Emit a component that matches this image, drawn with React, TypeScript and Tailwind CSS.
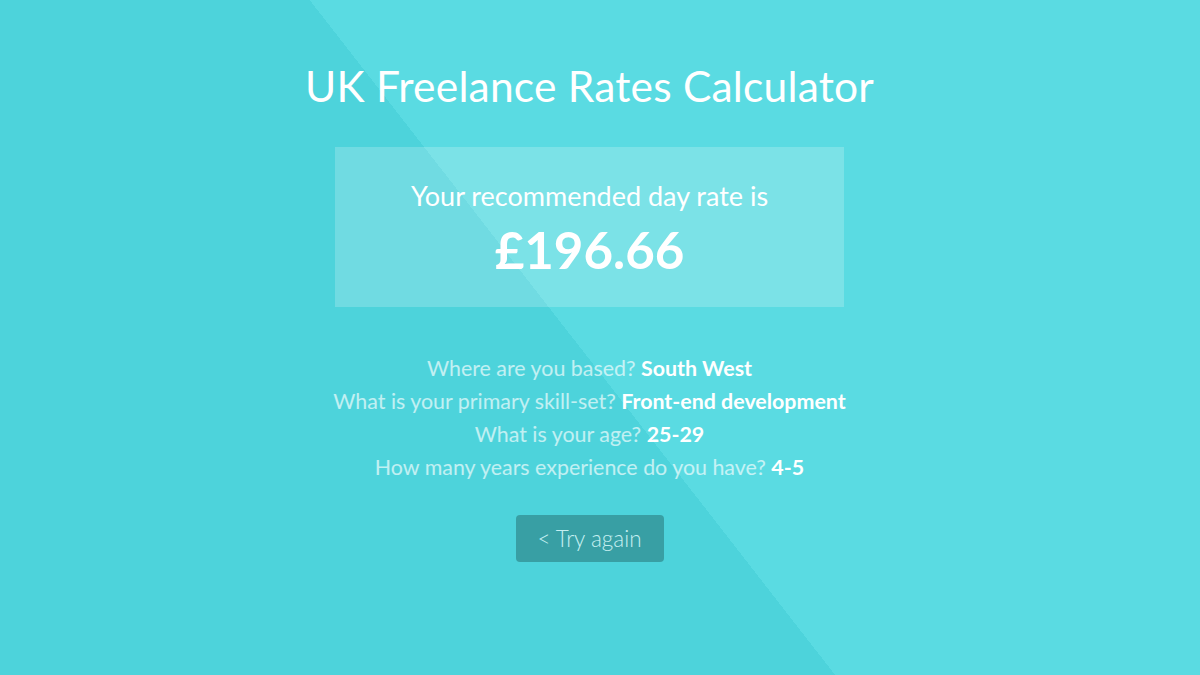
const rows = [
  { q: 'Where are you based?', a: 'South West' },
  { q: 'What is your primary skill-set?', a: 'Front-end development' },
  { q: 'What is your age?', a: '25-29' },
  { q: 'How many years experience do you have?', a: '4-5' },
];

export default function App() {
  return (
    <div
      className="w-full h-[675px] overflow-hidden bg-[linear-gradient(52.1deg,#4dd3db_48.4%,#5adbe2_48.4%)] text-white"
      style={{ fontFamily: 'Lato, "Open Sans", sans-serif' }}
    >
      <div className="flex flex-col items-center pr-[21px] pt-[58px]">
        <h1 className="text-[42.5px] leading-[56px] font-normal tracking-[0.2px]">
          UK Freelance Rates Calculator
        </h1>

        <div className="mt-[33px] w-[509px] h-[160px] bg-white/20 flex flex-col items-center justify-center">
          <p className="text-[27px] leading-[32px] mt-[6px]">Your recommended day rate is</p>
          <p className="text-[51px] leading-[60px] font-bold mt-[8px]">£196.66</p>
        </div>

        <div className="mt-[45px] flex flex-col items-center text-[21.4px] leading-[33px]">
          {rows.map((r) => (
            <p key={r.q}>
              <span className="text-white/65">{r.q}</span>{' '}
              <span className="font-bold">{r.a}</span>
            </p>
          ))}
        </div>

        <button className="mt-[31px] w-[148px] h-[47px] rounded-[4px] bg-[#389fa4] text-[22.5px] font-light text-[#c6eff1]">
          &lt; Try again
        </button>
      </div>
    </div>
  );
}
